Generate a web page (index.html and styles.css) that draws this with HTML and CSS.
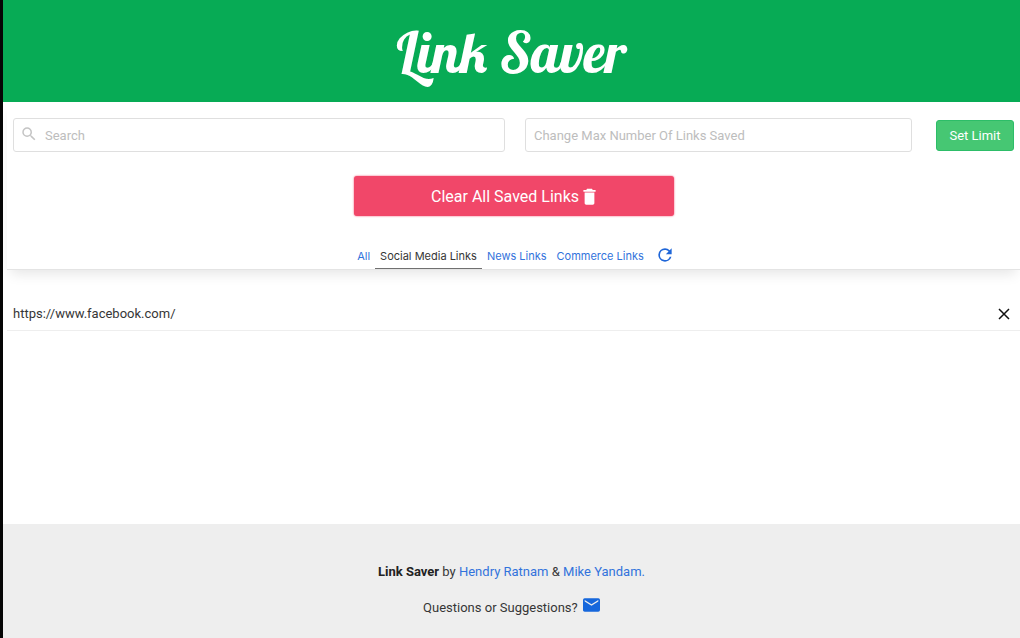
FILE: index.html
```html
<!DOCTYPE html>
<html lang="en">

<head>
    <meta charset="utf-8">
    <title>Link Saver</title>
    <link rel="stylesheet" href="styles.css">
</head>

<body>
    <header class="header">
        <h1 class="title">Link Saver</h1>
    </header>

    <div class="controls">
        <form class="toolbar">
            <div class="search">
                <svg class="search-icon" viewBox="0 0 24 24">
                    <path d="M15.5 14h-.79l-.28-.27A6.47 6.47 0 0 0 16 9.5 6.5 6.5 0 1 0 9.5 16c1.61 0 3.09-.59 4.23-1.57l.27.28v.79l5 4.99L20.49 19l-4.99-5zm-6 0C7.01 14 5 11.99 5 9.5S7.01 5 9.5 5 14 7.01 14 9.5 11.99 14 9.5 14z" />
                </svg>
                <input class="input input--search" type="text" aria-label="Search" placeholder="Search">
            </div>
            <input class="input input--limit" type="text" aria-label="Change Max Number Of Links Saved" placeholder="Change Max Number Of Links Saved">
            <button class="button button--limit" type="button">Set Limit</button>
        </form>

        <button class="button button--clear" type="button">
            Clear All Saved Links
            <svg class="trash-icon" viewBox="4 2 16 20">
                <path d="M6 20c0 1.100.9 2 2 2h8c1.100 0 2-.9 2-2V7H6v13zM19.500 4H16l-1-1.500H9L8 4H4.500v2h15V4z" />
            </svg>
        </button>

        <nav class="tabs">
            <a class="tab" href="#">All</a>
            <a class="tab tab--active" href="#">Social Media Links</a>
            <a class="tab" href="#">News Links</a>
            <a class="tab" href="#">Commerce Links</a>
            <button class="refresh" type="button" aria-label="Refresh">
                <svg viewBox="0 0 24 24">
                    <path d="M17.65 6.350A7.960 7.960 0 0 0 12 4a8 8 0 1 0 7.730 10h-2.080A6 6 0 1 1 12 6c1.660 0 3.140.69 4.220 1.780L13 11h7V4l-2.350 2.350z" />
                </svg>
            </button>
        </nav>
    </div>

    <main class="links">
        <div class="link-row">
            <a class="link-url" href="#">https://www.facebook.com/</a>
            <button class="remove" type="button" aria-label="Remove link">
                <svg viewBox="0 0 12 12">
                    <path d="M1 1l10 10M11 1L1 11" />
                </svg>
            </button>
        </div>
    </main>

    <footer class="footer">
        <p><strong>Link Saver</strong> by <a href="#">Hendry Ratnam</a> &amp; <a href="#">Mike Yandam.</a></p>
        <p>Questions or Suggestions?
            <a href="#" aria-label="Email us">
                <svg class="mail-icon" viewBox="2 4 20 16">
                    <path d="M20 4H4a2 2 0 0 0-2 2v12c0 1.100.9 2 2 2h16a2 2 0 0 0 2-2V6a2 2 0 0 0-2-2zm0 4l-8 5-8-5V6l8 5 8-5v2z" />
                </svg>
            </a>
        </p>
    </footer>
</body>

</html>
```
FILE: styles.css
```css
* {
    box-sizing: border-box;
}

body {
    margin: 0;
    min-height: 100vh;
    display: flex;
    flex-direction: column;
    border-left: 3px solid #050505;
    background-color: white;
    color: #363636;
    font-family: Roboto, "Liberation Sans", sans-serif;
    font-size: 13px;
    line-height: 20px;
}

a {
    color: #3273dc;
    text-decoration: none;
}

button {
    font-family: inherit;
    cursor: pointer;
}

.header {
    background-color: #07ab55;
    padding: 20px 0 18px;
    text-align: center;
}

.title {
    margin: 0;
    color: white;
    font-family: Lobster, "Liberation Serif", cursive;
    font-size: 56px;
    font-weight: normal;
    line-height: 64px;
}

.controls {
    display: flex;
    flex-direction: column;
    align-items: center;
    margin-left: 4px;
    border-bottom: 1px solid #e4e4e4;
    box-shadow: 0 8px 12px -4px rgba(10, 10, 10, 0.1);
}

.toolbar {
    align-self: stretch;
    display: flex;
    align-items: center;
    padding: 16px 6px 24px;
}

.search {
    position: relative;
    flex: 4;
    margin-right: 20px;
}

.search-icon {
    position: absolute;
    top: 7px;
    left: 7px;
    width: 18px;
    height: 18px;
    fill: #c4c4c4;
}

.input {
    width: 100%;
    height: 34px;
    padding: 0 8px;
    border: 1px solid #dfdfdf;
    border-radius: 3px;
    background-color: white;
    color: #363636;
    font-family: inherit;
    font-size: 13px;
}

.input::placeholder {
    color: #bdbdbd;
}

.input--search {
    display: block;
    padding-left: 31px;
}

.input--limit {
    flex: 3;
    min-width: 0;
    margin-right: 24px;
}

.button {
    border: 0;
    border-radius: 3px;
    color: white;
}

.button--limit {
    width: 78px;
    height: 31px;
    padding: 0;
    background-color: #46c773;
    border: 1px solid #2dbd68;
    font-size: 13px;
}

.button--clear {
    display: flex;
    align-items: center;
    justify-content: center;
    gap: 4px;
    width: 320px;
    height: 40px;
    background-color: #f14769;
    box-shadow: 0 0 2px #f14769;
    font-size: 16px;
}

.trash-icon {
    width: 13px;
    height: 17px;
    fill: white;
}

.tabs {
    display: flex;
    align-items: center;
    margin-top: 25px;
    font-family: Inter, "Liberation Sans", sans-serif;
    font-size: 11px;
}

.tab {
    height: 28px;
    padding: 0 5px;
    line-height: 30px;
}

.tab--active {
    border-bottom: 1px solid #707070;
    color: #363636;
}

.refresh {
    display: flex;
    margin-left: 6px;
    padding: 0;
    border: 0;
    background: none;
}

.refresh svg {
    width: 20px;
    height: 20px;
    fill: #1f66d8;
}

.links {
    flex: 1;
    margin-left: 4px;
    padding-top: 28px;
}

.link-row {
    display: flex;
    align-items: center;
    justify-content: space-between;
    padding: 6px 10px 6px 6px;
    border-bottom: 1px solid #eeeeee;
}

.link-url {
    color: #363636;
}

.remove {
    display: flex;
    padding: 0;
    border: 0;
    background: none;
}

.remove svg {
    width: 12px;
    height: 12px;
    stroke: #111111;
    stroke-width: 1.500;
}

.footer {
    padding: 38px 20px 20px;
    background-color: #eeeeee;
    text-align: center;
}

.footer p {
    margin: 0;
    padding-bottom: 16px;
}

.footer p:last-child {
    padding-bottom: 0;
}

.footer strong {
    color: #222222;
}

.mail-icon {
    width: 17px;
    height: 14px;
    margin-left: 2px;
    fill: #1667dc;
}
```
